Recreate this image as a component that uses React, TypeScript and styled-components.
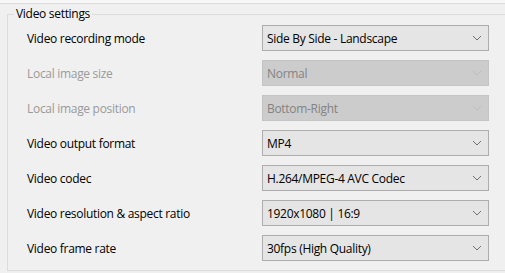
import React from 'react'
import styled, { createGlobalStyle } from 'styled-components'

const Global = createGlobalStyle`
  html, body {
    margin: 0;
    padding: 0;
    background: #f0f0f0;
    overflow: hidden;
  }
  body {
    font-family: "Open Sans", "Noto Sans", "Liberation Sans", sans-serif;
    font-size: 12px;
    letter-spacing: -0.3px;
  }
`

const Page = styled.div`
  width: 505px;
  height: 273px;
  overflow: hidden;
`

const TopEdge = styled.div`
  height: 3px;
  background: #f7f7f7;
  border-bottom: 1px solid #dcdcdc;
`

const Group = styled.fieldset`
  margin: 2px 0 0 7px;
  width: 520px;
  border: 1px solid #dcdcdc;
  padding: 3px 0 9px 19px;
  box-sizing: border-box;
  legend {
    padding: 0 2px;
    margin-left: -13px;
    color: #000;
    line-height: 16px;
  }
`

const Rows = styled.div`
  display: grid;
  grid-template-columns: 235px 227px;
  grid-auto-rows: 26px;
  row-gap: 9px;
  align-items: center;
`

const Label = styled.div<{ $disabled?: boolean }>`
  color: ${({ $disabled }) => ($disabled ? '#9a9a9a' : '#000')};
  white-space: nowrap;
`

const Select = styled.div<{ $disabled?: boolean }>`
  height: 26px;
  box-sizing: border-box;
  display: flex;
  align-items: center;
  justify-content: space-between;
  padding: 0 6px 0 4px;
  border: 1px solid ${({ $disabled }) => ($disabled ? '#c4c4c4' : '#adadad')};
  background: ${({ $disabled }) => ($disabled ? '#cccccc' : '#e5e5e5')};
  color: ${({ $disabled }) => ($disabled ? '#838383' : '#000')};
  white-space: nowrap;
`

const Chevron: React.FC<{ disabled?: boolean }> = ({ disabled }) => (
  <svg width="10" height="6" viewBox="0 0 10 6">
    <path d="M1 1 L5 5 L9 1" fill="none" stroke={disabled ? '#bdbdbd' : '#707070'} strokeWidth="1" />
  </svg>
)

const rows = [
  { label: 'Video recording mode', value: 'Side By Side - Landscape' },
  { label: 'Local image size', value: 'Normal', disabled: true },
  { label: 'Local image position', value: 'Bottom-Right', disabled: true },
  { label: 'Video output format', value: 'MP4' },
  { label: 'Video codec', value: 'H.264/MPEG-4 AVC Codec' },
  { label: 'Video resolution & aspect ratio', value: '1920x1080 | 16:9' },
  { label: 'Video frame rate', value: '30fps (High Quality)' },
]

export default function App() {
  return (
    <Page>
      <Global />
      <TopEdge />
      <Group>
        <legend>Video settings</legend>
        <Rows>
          {rows.map((r) => (
            <React.Fragment key={r.label}>
              <Label $disabled={r.disabled}>{r.label}</Label>
              <Select $disabled={r.disabled}>
                <span>{r.value}</span>
                <Chevron disabled={r.disabled} />
              </Select>
            </React.Fragment>
          ))}
        </Rows>
      </Group>
    </Page>
  )
}
